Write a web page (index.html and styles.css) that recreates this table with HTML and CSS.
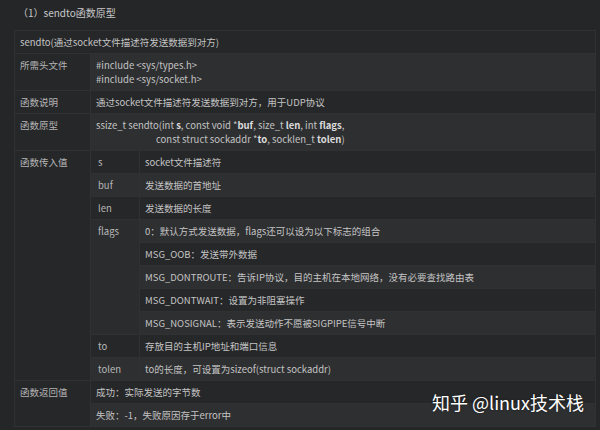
FILE: index.html
```html
<!DOCTYPE html>
<html>
  <head>
    <title>sendto函数原型</title>
    <link rel="stylesheet" href="styles.css">
  </head>
  <body>
    <div id="page">
      <div class="heading">（1）sendto函数原型</div>
      <table class="api-table">
        <colgroup>
          <col class="col-name">
          <col class="col-param">
          <col>
        </colgroup>
        <tr class="dark">
          <td colspan="3">sendto(通过socket文件描述符发送数据到对方)</td>
        </tr>
        <tr class="light">
          <td class="label">所需头文件</td>
          <td colspan="2">#include &lt;sys/types.h&gt;<br>#include &lt;sys/socket.h&gt;</td>
        </tr>
        <tr class="dark">
          <td class="label">函数说明</td>
          <td colspan="2">通过socket文件描述符发送数据到对方，用于UDP协议</td>
        </tr>
        <tr class="light">
          <td class="label">函数原型</td>
          <td colspan="2">ssize_t sendto(int <b>s</b>, const void *<b>buf</b>, size_t <b>len</b>, int <b>flags</b>,<br><span class="indent">const struct sockaddr *<b>to</b>, socklen_t <b>tolen</b>)</span></td>
        </tr>
        <tr class="dark">
          <td class="label" rowspan="10">函数传入值</td>
          <td class="param">s</td>
          <td>socket文件描述符</td>
        </tr>
        <tr class="light">
          <td class="param">buf</td>
          <td>发送数据的首地址</td>
        </tr>
        <tr class="dark">
          <td class="param">len</td>
          <td>发送数据的长度</td>
        </tr>
        <tr class="light">
          <td class="param flags" rowspan="5">flags</td>
          <td>0：默认方式发送数据，flags还可以设为以下标志的组合</td>
        </tr>
        <tr class="dark">
          <td>MSG_OOB：发送带外数据</td>
        </tr>
        <tr class="light">
          <td>MSG_DONTROUTE：告诉IP协议，目的主机在本地网络，没有必要查找路由表</td>
        </tr>
        <tr class="dark">
          <td>MSG_DONTWAIT：设置为非阻塞操作</td>
        </tr>
        <tr class="light">
          <td>MSG_NOSIGNAL：表示发送动作不愿被SIGPIPE信号中断</td>
        </tr>
        <tr class="dark">
          <td class="param">to</td>
          <td>存放目的主机IP地址和端口信息</td>
        </tr>
        <tr class="light">
          <td class="param">tolen</td>
          <td>to的长度，可设置为sizeof(struct sockaddr)</td>
        </tr>
        <tr class="dark">
          <td class="label" rowspan="2">函数返回值</td>
          <td colspan="2">成功：实际发送的字节数</td>
        </tr>
        <tr class="light">
          <td colspan="2">失败：-1，失败原因存于error中</td>
        </tr>
      </table>
      <div class="watermark">知乎 @linux技术栈</div>
    </div>
  </body>
</html>
```

FILE: styles.css
```css
* {
  margin: 0;
  padding: 0;
  box-sizing: border-box;
}

body {
  font-family: "Noto Sans CJK SC", "Liberation Sans", sans-serif;
  background-color: #252628;
  color: #c4c4c4;
  width: 600px;
  height: 430px;
  overflow: hidden;
}

#page {
  position: relative;
  height: 100%;
  padding: 0 4px 0 14px;
}

.heading {
  height: 30px;
  line-height: 26px;
  padding-left: 4px;
  font-size: 10px;
  color: #c8c8c8;
}

.api-table {
  width: 582px;
  border-collapse: collapse;
  font-size: 9.5px;
  line-height: 14px;
}

.col-name {
  width: 76px;
}

.col-param {
  width: 49px;
}

.api-table td {
  vertical-align: top;
  padding: 4px 5px;
  border: 1px solid #303133;
}

.api-table tr.dark td {
  background-color: #262729;
}

.api-table tr.light td {
  background-color: #2e2f31;
}

.api-table td.label {
  color: #b4b4b4;
  background-color: #262729 !important;
}

.api-table td.param {
  padding-left: 7px;
  color: #b8b8b8;
}

.api-table td.flags {
  background-color: #2b2c2e !important;
}

.api-table b {
  color: #dcdcdc;
}

.indent {
  padding-left: 60px;
}

.watermark {
  position: absolute;
  left: 432px;
  top: 389px;
  font-size: 18px;
  color: #ffffff;
  text-shadow: 0 0 2px rgba(0, 0, 0, 0.6);
}
```
